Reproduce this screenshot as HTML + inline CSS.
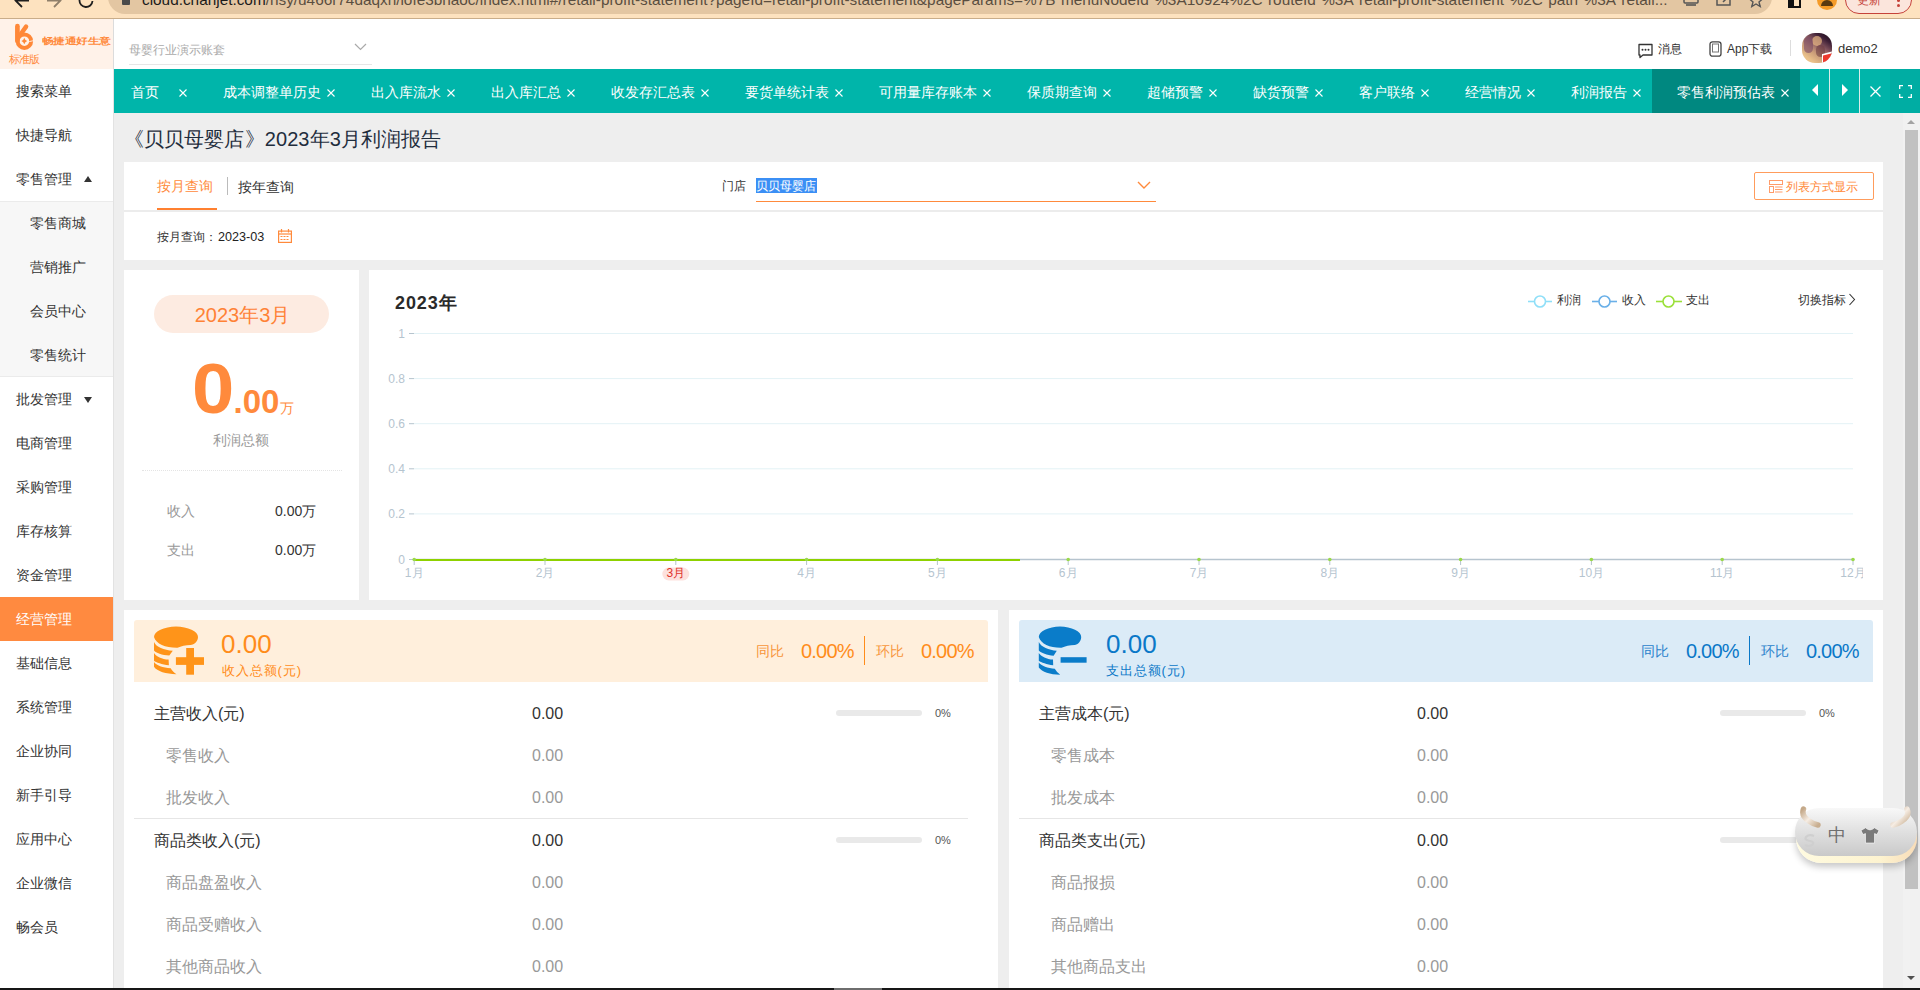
<!DOCTYPE html>
<html><head><meta charset="utf-8">
<style>
*{margin:0;padding:0;box-sizing:border-box}
html,body{width:1920px;height:990px;overflow:hidden;background:#eeeeee;font-family:"Liberation Sans",sans-serif;color:#333;font-size:14px;position:relative}
.a{position:absolute;white-space:nowrap}
#chrome{position:absolute;left:0;top:0;width:1920px;height:19px;background:#fde2bf;border-bottom:1px solid #c9ad8a;overflow:hidden}
#url{position:absolute;left:108px;top:-20px;width:1664px;height:34px;border-radius:17px;background:#e3c6a2}
#urltext{position:absolute;left:142px;top:-9px;font-size:15.35px;color:#5a4e40;white-space:nowrap;letter-spacing:0}
#header{position:absolute;left:0;top:19px;width:1920px;height:50px;background:#fff}
#logo{position:absolute;left:0;top:19px;width:114px;height:50px;background:#fff2e9;border-right:1px solid #dcdcdc}
#side{position:absolute;left:0;top:69px;width:114px;height:921px;background:#fff;border-right:1px solid #e2e2e2}
.si{position:absolute;left:0;width:113px;height:44px;line-height:44px;padding-left:16px;font-size:14px;color:#333;white-space:nowrap}
.si.sub{padding-left:30px}
.si.act{background:#ff8a40;color:#fff}
.tri{position:absolute;left:84px;top:20px;width:0;height:0;border-left:4.5px solid transparent;border-right:4.5px solid transparent}
.tri.up{border-bottom:6px solid #333;top:19px}
.tri.dn{border-top:6px solid #333}
#subbg{position:absolute;left:0;top:201px;width:113px;height:176px;background:#f7f7f7;border-top:1px solid #ebebeb;border-bottom:1px solid #ebebeb}
#tabs{position:absolute;left:114px;top:69px;width:1806px;height:44px;background:#00b5aa;overflow:hidden}
.tab{position:absolute;top:0;height:44px;line-height:44px;color:#fff;font-size:14px;white-space:nowrap}
.tab.act{background:#008880}
.tab .tt{position:absolute;left:25px;top:1px}
.tab .x{position:absolute;top:20px;height:8px;line-height:0}
.ctl{position:absolute;top:0;width:30px;height:44px;background:#00b5aa}
#main{position:absolute;left:114px;top:113px;width:1790px;height:877px;background:#eeeeee}
.card{position:absolute;background:#fff}
.yl{font-size:12px;fill:#b5c4cf;font-family:"Liberation Sans",sans-serif}
.xl{font-size:12px;fill:#b5c4cf;font-family:"Liberation Sans",sans-serif}
.rl,.rv{position:absolute;font-size:16px;line-height:24px;white-space:nowrap;margin-top:1px}
.rh{color:#333}
.rs{color:#999}
.bar{position:absolute;width:86px;height:6px;border-radius:3px;background:#e9e9e9}
.pct{position:absolute;font-size:11px;line-height:18px;color:#555}
.div{position:absolute;height:1px;background:#e6e6e6}
#scroll{position:absolute;left:1903px;top:113px;width:17px;height:875px;background:#f1f1f1}
#thumb{position:absolute;left:2px;top:17px;width:13px;height:759px;background:#c1c1c1}
#bottombar{position:absolute;left:0;top:988px;width:1920px;height:2px;background:#161616}
</style></head><body>

<!-- browser chrome -->
<div id="chrome">
  <svg class="a" style="left:0;top:0" width="100" height="12" viewBox="0 0 100 12"><path d="M22 7L15.5 0.5L22 -6M15.5 0.5H29" stroke="#1e1e1e" stroke-width="1.8" fill="none"/><path d="M54 7L60.5 0.5L54 -6M60.5 0.5H47" stroke="#8f7f6a" stroke-width="1.8" fill="none"/><path d="M92.5 1A6.5 6.5 0 1 1 79.5 0" stroke="#1e1e1e" stroke-width="1.8" fill="none"/></svg>
  
  
  <div id="url"></div>
  <div class="a" style="left:122px;top:-2px;width:8px;height:7px;background:#4a4a4a;border-radius:1px"></div>
  <div id="urltext"><span style="color:#1a1a1a">cloud.chanjet.com</span>/nsy/u466r74daqxn/lofe3bnaoc/index.html#/retail-profit-statement?pageId=retail-profit-statement&amp;pageParams=%7B"menuNodeId"%3A10924%2C"routeId"%3A"retail-profit-statement"%2C"path"%3A"retail...</div>
  <svg class="a" style="left:1682px;top:-4px" width="18" height="12" viewBox="0 0 18 12"><rect x="2" y="-2" width="14" height="9" rx="1" stroke="#555" stroke-width="1.5" fill="none"/><path d="M4 9H14" stroke="#555" stroke-width="1.6"/></svg>
  <svg class="a" style="left:1715px;top:-4px" width="18" height="12" viewBox="0 0 18 12"><path d="M2 0V9H15V4" stroke="#555" stroke-width="1.5" fill="none"/><path d="M8 6L13 1" stroke="#555" stroke-width="1.5"/></svg>
  <svg class="a" style="left:1747px;top:-4px" width="18" height="12" viewBox="0 0 18 12"><path d="M9 -3L11 2L16 2.5L12 6L13.2 10.5L9 8L4.8 10.5L6 6L2 2.5L7 2Z" stroke="#555" stroke-width="1.4" fill="none"/></svg>
  <div class="a" style="left:1788px;top:-3px;width:13px;height:11px;border:2px solid #111;border-left-width:6px"></div>
  <div class="a" style="left:1817px;top:-10px;width:20px;height:20px;border-radius:10px;background:#f59b27"><div class="a" style="left:4px;top:10px;width:12px;height:6px;border-radius:6px 6px 0 0;background:#5a3a10"></div></div>
  <div class="a" style="left:1845px;top:-14px;width:67px;height:28px;border-radius:14px;border:1px solid #c5423a;background:#fbe5dc"></div>
  <div class="a" style="left:1857px;top:-8px;font-size:12px;color:#c5423a">更新</div>
  <div class="a" style="left:1897px;top:-1px;width:3px;height:3px;border-radius:2px;background:#c5423a"></div>
  <div class="a" style="left:1897px;top:4px;width:3px;height:3px;border-radius:2px;background:#c5423a"></div>
</div>

<!-- header -->
<div id="header">
  <div class="a" style="left:129px;top:22.5px;font-size:12px;color:#aaa">母婴行业演示账套</div>
  <div class="a" style="left:129px;top:45px;width:243px;height:1px;background:#e6e6e6"></div>
  <svg class="a" style="left:354px;top:23.5px" width="13" height="8" viewBox="0 0 13 8"><path d="M1 1L6.5 6.5L12 1" stroke="#aaa" stroke-width="1.2" fill="none"/></svg>

  <svg class="a" style="left:1637px;top:24px" width="17" height="16" viewBox="0 0 17 16"><path d="M2 1.5H15V12H6L3 14.5V12H2Z" stroke="#333" stroke-width="1.3" fill="none" stroke-linejoin="round"/><circle cx="5.5" cy="6.8" r="1" fill="#333"/><circle cx="8.5" cy="6.8" r="1" fill="#333"/><circle cx="11.5" cy="6.8" r="1" fill="#333"/></svg>
  <div class="a" style="left:1658px;top:22px;font-size:12px;color:#333">消息</div>
  <svg class="a" style="left:1709px;top:22px" width="13" height="16" viewBox="0 0 13 16"><rect x="1" y="0.8" width="11" height="14.4" rx="2.5" stroke="#444" stroke-width="1.3" fill="none"/><rect x="3.5" y="3" width="6" height="8" fill="none" stroke="#777" stroke-width="1"/></svg>
  <div class="a" style="left:1727px;top:22px;font-size:12px;color:#333">App下载</div>
  <div class="a" style="left:1790px;top:21px;width:1px;height:16px;background:#ddd"></div>
  <div class="a" style="left:1802px;top:14px;width:30px;height:30px;border-radius:13px;overflow:hidden;background:linear-gradient(215deg,#12060f 0%,#3e2036 22%,#8a5a62 42%,#c89a78 62%,#e9c08a 82%,#f0c98e 100%)">
    <div class="a" style="left:10px;top:3px;width:10px;height:10px;border-radius:5px;background:#e0b080;opacity:.75"></div>
    <div class="a" style="left:2px;top:4px;width:9px;height:16px;border-radius:5px;background:#7a4a66;opacity:.6"></div>
    <div class="a" style="left:14px;top:12px;width:9px;height:12px;border-radius:5px;background:#6a3a40;opacity:.55"></div>
    <div class="a" style="left:19.5px;top:18px;width:12px;height:13px;background:#fff;clip-path:polygon(0 25%,100% 0,100% 100%,0 100%)"></div>
    <div class="a" style="left:21px;top:20px;width:10px;height:11px;background:#ec3b2f;clip-path:polygon(0 22%,100% 0,100% 100%,0 100%)"></div>
  </div>
  <div class="a" style="left:1838px;top:21.5px;font-size:13px;color:#333">demo2</div>
</div>

<!-- logo -->
<div id="logo">
  <svg class="a" style="left:10px;top:1px" width="30" height="32" viewBox="0 0 30 32"><path d="M7.4 6.2V21" stroke="#ff8838" stroke-width="4.7" stroke-linecap="round" fill="none"/><path d="M16.1 6.6L10.8 14" stroke="#ff8838" stroke-width="4.4" stroke-linecap="round" fill="none"/><circle cx="14.4" cy="21.2" r="6.75" stroke="#ff8838" stroke-width="3.9" fill="none"/><path d="M19.2 21.6L23.8 20.6" stroke="#fff2e9" stroke-width="0.9"/><path d="M14.3 17.7Q15 20.3 17.2 21Q15 21.7 14.3 24.3Q13.6 21.7 11.4 21Q13.6 20.3 14.3 17.7Z" fill="#ff8838"/></svg>
  <div class="a" style="left:42px;top:13px;font-size:11.3px;font-weight:bold;color:#ff8a3c;letter-spacing:0px;transform:scale(1.045,0.8);transform-origin:0 100%">畅捷通好生意</div>
  <div class="a" style="left:9px;top:33px;font-size:11px;color:#ff8a3c;letter-spacing:-1px">标准版</div>
</div>

<!-- sidebar -->
<div id="side"></div>
<div id="subbg"></div>
<div class="si" style="top:69px">搜索菜单</div>
<div class="si" style="top:113px">快捷导航</div>
<div class="si" style="top:157px">零售管理<span class="tri up"></span></div>
<div class="si sub" style="top:201px">零售商城</div>
<div class="si sub" style="top:245px">营销推广</div>
<div class="si sub" style="top:289px">会员中心</div>
<div class="si sub" style="top:333px">零售统计</div>
<div class="si" style="top:377px">批发管理<span class="tri dn"></span></div>
<div class="si" style="top:421px">电商管理</div>
<div class="si" style="top:465px">采购管理</div>
<div class="si" style="top:509px">库存核算</div>
<div class="si" style="top:553px">资金管理</div>
<div class="si act" style="top:597px">经营管理</div>
<div class="si" style="top:641px">基础信息</div>
<div class="si" style="top:685px">系统管理</div>
<div class="si" style="top:729px">企业协同</div>
<div class="si" style="top:773px">新手引导</div>
<div class="si" style="top:817px">应用中心</div>
<div class="si" style="top:861px">企业微信</div>
<div class="si" style="top:905px">畅会员</div>

<!-- tabs -->
<div id="tabs">
<div class="tab" style="left:-8px;width:92px"><span class="tt">首页</span><span class="x" style="left:73px"><svg width="8" height="8" viewBox="0 0 8 8"><path d="M0.5 0.5L7.5 7.5M7.5 0.5L0.5 7.5" stroke="#fff" stroke-width="1.1"/></svg></span></div>
<div class="tab" style="left:84px;width:148px"><span class="tt">成本调整单历史</span><span class="x" style="left:129px"><svg width="8" height="8" viewBox="0 0 8 8"><path d="M0.5 0.5L7.5 7.5M7.5 0.5L0.5 7.5" stroke="#fff" stroke-width="1.1"/></svg></span></div>
<div class="tab" style="left:232px;width:120px"><span class="tt">出入库流水</span><span class="x" style="left:101px"><svg width="8" height="8" viewBox="0 0 8 8"><path d="M0.5 0.5L7.5 7.5M7.5 0.5L0.5 7.5" stroke="#fff" stroke-width="1.1"/></svg></span></div>
<div class="tab" style="left:352px;width:120px"><span class="tt">出入库汇总</span><span class="x" style="left:101px"><svg width="8" height="8" viewBox="0 0 8 8"><path d="M0.5 0.5L7.5 7.5M7.5 0.5L0.5 7.5" stroke="#fff" stroke-width="1.1"/></svg></span></div>
<div class="tab" style="left:472px;width:134px"><span class="tt">收发存汇总表</span><span class="x" style="left:115px"><svg width="8" height="8" viewBox="0 0 8 8"><path d="M0.5 0.5L7.5 7.5M7.5 0.5L0.5 7.5" stroke="#fff" stroke-width="1.1"/></svg></span></div>
<div class="tab" style="left:606px;width:134px"><span class="tt">要货单统计表</span><span class="x" style="left:115px"><svg width="8" height="8" viewBox="0 0 8 8"><path d="M0.5 0.5L7.5 7.5M7.5 0.5L0.5 7.5" stroke="#fff" stroke-width="1.1"/></svg></span></div>
<div class="tab" style="left:740px;width:148px"><span class="tt">可用量库存账本</span><span class="x" style="left:129px"><svg width="8" height="8" viewBox="0 0 8 8"><path d="M0.5 0.5L7.5 7.5M7.5 0.5L0.5 7.5" stroke="#fff" stroke-width="1.1"/></svg></span></div>
<div class="tab" style="left:888px;width:120px"><span class="tt">保质期查询</span><span class="x" style="left:101px"><svg width="8" height="8" viewBox="0 0 8 8"><path d="M0.5 0.5L7.5 7.5M7.5 0.5L0.5 7.5" stroke="#fff" stroke-width="1.1"/></svg></span></div>
<div class="tab" style="left:1008px;width:106px"><span class="tt">超储预警</span><span class="x" style="left:87px"><svg width="8" height="8" viewBox="0 0 8 8"><path d="M0.5 0.5L7.5 7.5M7.5 0.5L0.5 7.5" stroke="#fff" stroke-width="1.1"/></svg></span></div>
<div class="tab" style="left:1114px;width:106px"><span class="tt">缺货预警</span><span class="x" style="left:87px"><svg width="8" height="8" viewBox="0 0 8 8"><path d="M0.5 0.5L7.5 7.5M7.5 0.5L0.5 7.5" stroke="#fff" stroke-width="1.1"/></svg></span></div>
<div class="tab" style="left:1220px;width:106px"><span class="tt">客户联络</span><span class="x" style="left:87px"><svg width="8" height="8" viewBox="0 0 8 8"><path d="M0.5 0.5L7.5 7.5M7.5 0.5L0.5 7.5" stroke="#fff" stroke-width="1.1"/></svg></span></div>
<div class="tab" style="left:1326px;width:106px"><span class="tt">经营情况</span><span class="x" style="left:87px"><svg width="8" height="8" viewBox="0 0 8 8"><path d="M0.5 0.5L7.5 7.5M7.5 0.5L0.5 7.5" stroke="#fff" stroke-width="1.1"/></svg></span></div>
<div class="tab" style="left:1432px;width:106px"><span class="tt">利润报告</span><span class="x" style="left:87px"><svg width="8" height="8" viewBox="0 0 8 8"><path d="M0.5 0.5L7.5 7.5M7.5 0.5L0.5 7.5" stroke="#fff" stroke-width="1.1"/></svg></span></div>
<div class="tab act" style="left:1538px;width:148px"><span class="tt">零售利润预估表</span><span class="x" style="left:129px"><svg width="8" height="8" viewBox="0 0 8 8"><path d="M0.5 0.5L7.5 7.5M7.5 0.5L0.5 7.5" stroke="#fff" stroke-width="1.1"/></svg></span></div>
  <div class="ctl" style="left:1686px"><div class="a" style="left:12px;top:15px;width:0;height:0;border-top:6px solid transparent;border-bottom:6px solid transparent;border-right:6px solid #fff"></div></div>
  <div class="a" style="left:1715px;top:0;width:1px;height:44px;background:#d9ece9"></div>
  <div class="ctl" style="left:1716px"><div class="a" style="left:12px;top:15px;width:0;height:0;border-top:6px solid transparent;border-bottom:6px solid transparent;border-left:6px solid #fff"></div></div>
  <div class="a" style="left:1745px;top:0;width:1px;height:44px;background:#d9ece9"></div>
  <div class="ctl" style="left:1746px"><svg class="a" style="left:10px;top:17px" width="11" height="11" viewBox="0 0 11 11"><path d="M0.5 0.5L10.5 10.5M10.5 0.5L0.5 10.5" stroke="#fff" stroke-width="1.3"/></svg></div>
  <div class="ctl" style="left:1776px;width:30px;background:#00ada3"><svg class="a" style="left:9px;top:16px" width="13" height="13" viewBox="0 0 13 13"><path d="M0.7 4V0.7H4M9 0.7H12.3V4M12.3 9V12.3H9M4 12.3H0.7V9" stroke="#fff" stroke-width="1.3" fill="none"/></svg></div>
</div>

<!-- main -->
<div id="main"></div>
<div class="a" style="left:124px;top:125px;font-size:20px;color:#1f2d3d;line-height:28px;letter-spacing:0.1px">《贝贝母婴店》2023年3月利润报告</div>

<!-- filter card -->
<div class="card" style="left:124px;top:162px;width:1759px;height:98px"></div>
<div class="a" style="left:124px;top:210px;width:1759px;height:2px;background:#ececec"></div>
<div class="a" style="left:157px;top:176px;font-size:14px;color:#ff8a3c;line-height:20px">按月查询</div>
<div class="a" style="left:157px;top:208px;width:60px;height:2px;background:#ff8030"></div>
<div class="a" style="left:227px;top:177px;width:1px;height:18px;background:#bbb"></div>
<div class="a" style="left:238px;top:177px;font-size:14px;color:#333;line-height:20px">按年查询</div>
<div class="a" style="left:722px;top:177px;font-size:12px;color:#333;line-height:18px">门店</div>
<div class="a" style="left:756px;top:178px;height:15px;width:61px;background:#3b8ff5"></div>
<div class="a" style="left:756px;top:177px;font-size:12px;color:#fff;line-height:18px">贝贝母婴店</div>
<div class="a" style="left:756px;top:201px;width:400px;height:1px;background:#ff8a3c"></div>
<svg class="a" style="left:1137px;top:181px" width="14" height="9" viewBox="0 0 14 9"><path d="M1 1L7 7L13 1" stroke="#ff8a3c" stroke-width="1.4" fill="none"/></svg>
<div class="a" style="left:1754px;top:172px;width:120px;height:28px;border:1px solid #ff9c5c;border-radius:2px"></div>
<svg class="a" style="left:1769px;top:180px" width="14" height="13" viewBox="0 0 14 13"><rect x="0.5" y="0.5" width="13" height="4" fill="none" stroke="#ff9c6a" stroke-width="1"/><rect x="0.5" y="6.5" width="4" height="6" fill="none" stroke="#ff9c6a" stroke-width="1"/><path d="M6 7H13.5M6 9.5H13.5M6 12H13.5" stroke="#ff9c6a" stroke-width="1"/></svg>
<div class="a" style="left:1786px;top:178px;font-size:12px;color:#ff8a3c;line-height:18px">列表方式显示</div>
<div class="a" style="left:157px;top:228px;font-size:12px;color:#333;line-height:18px">按月查询：</div><div class="a" style="left:218px;top:228px;font-size:12.6px;color:#222;line-height:18px">2023-03</div>
<svg class="a" style="left:278px;top:229px" width="14" height="14" viewBox="0 0 14 14"><rect x="0.6" y="2.1" width="12.8" height="11.3" fill="none" stroke="#ff8a3c" stroke-width="1.2"/><path d="M0.6 5H13.4" stroke="#ff8a3c" stroke-width="1.2"/><path d="M3.5 0V3.5M10.5 0V3.5" stroke="#ff8a3c" stroke-width="1.2"/><path d="M2.5 7.5H11.5M2.5 10.5H11.5" stroke="#ff8a3c" stroke-width="1" stroke-dasharray="2 1"/></svg>

<!-- stats card -->
<div class="card" style="left:124px;top:270px;width:235px;height:330px"></div>
<div class="a" style="left:154px;top:295px;width:175px;height:38px;border-radius:19px;background:#fdebe1"></div>
<div class="a" style="left:155px;top:300px;width:175px;text-align:center;font-size:20px;color:#ff8236;line-height:30px">2023年3月</div>
<div class="a" style="left:192px;top:349px;font-weight:bold;color:#ff8a3c;line-height:80px"><span style="font-size:71px;display:inline-block;transform:scaleX(1.07);transform-origin:left">0</span><span style="font-size:33px;margin-left:2px">.00</span><span style="font-size:14px;font-weight:normal;margin-left:1px">万</span></div>
<div class="a" style="left:213px;top:430px;font-size:14px;color:#999;line-height:20px">利润总额</div>
<div class="a" style="left:142px;top:470px;width:200px;height:0;border-top:1px dotted #e4e4e4"></div>
<div class="a" style="left:167px;top:501px;font-size:14px;color:#999;line-height:20px">收入</div>
<div class="a" style="left:275px;top:501px;font-size:14px;color:#333;line-height:20px">0.00万</div>
<div class="a" style="left:167px;top:540px;font-size:14px;color:#999;line-height:20px">支出</div>
<div class="a" style="left:275px;top:540px;font-size:14px;color:#333;line-height:20px">0.00万</div>

<!-- chart card -->
<div class="card" style="left:369px;top:270px;width:1514px;height:330px"></div>
<div class="a" style="left:395px;top:291px;font-size:18px;font-weight:bold;color:#2a2a2a;line-height:24px;letter-spacing:0.9px">2023年</div>
<svg class="a" style="left:0;top:0" width="1920" height="990"><defs><clipPath id="cc"><rect x="369" y="270" width="1494" height="330"/></clipPath></defs><g clip-path="url(#cc)">
<line x1="409" y1="333.5" x2="414" y2="333.5" stroke="#b6c4ce" stroke-width="1"/>
<line x1="414" y1="333.5" x2="1853" y2="333.5" stroke="#e3f2f6" stroke-width="1"/>
<text x="405" y="338.0" text-anchor="end" class="yl">1</text>
<line x1="409" y1="378.6" x2="414" y2="378.6" stroke="#b6c4ce" stroke-width="1"/>
<line x1="414" y1="378.6" x2="1853" y2="378.6" stroke="#e3f2f6" stroke-width="1"/>
<text x="405" y="383.1" text-anchor="end" class="yl">0.8</text>
<line x1="409" y1="423.7" x2="414" y2="423.7" stroke="#b6c4ce" stroke-width="1"/>
<line x1="414" y1="423.7" x2="1853" y2="423.7" stroke="#e3f2f6" stroke-width="1"/>
<text x="405" y="428.2" text-anchor="end" class="yl">0.6</text>
<line x1="409" y1="468.8" x2="414" y2="468.8" stroke="#b6c4ce" stroke-width="1"/>
<line x1="414" y1="468.8" x2="1853" y2="468.8" stroke="#e3f2f6" stroke-width="1"/>
<text x="405" y="473.3" text-anchor="end" class="yl">0.4</text>
<line x1="409" y1="513.9" x2="414" y2="513.9" stroke="#b6c4ce" stroke-width="1"/>
<line x1="414" y1="513.9" x2="1853" y2="513.9" stroke="#e3f2f6" stroke-width="1"/>
<text x="405" y="518.4" text-anchor="end" class="yl">0.2</text>
<line x1="409" y1="559.5" x2="414" y2="559.5" stroke="#b6c4ce" stroke-width="1"/>
<text x="405" y="564" text-anchor="end" class="yl">0</text>
<line x1="414" y1="559.5" x2="1853" y2="559.5" stroke="#b6c4ce" stroke-width="1.5"/>
<line x1="414.2" y1="559" x2="414.2" y2="565" stroke="#b6c4ce" stroke-width="1"/>
<line x1="545.0" y1="559" x2="545.0" y2="565" stroke="#b6c4ce" stroke-width="1"/>
<line x1="675.8" y1="559" x2="675.8" y2="565" stroke="#b6c4ce" stroke-width="1"/>
<line x1="806.6" y1="559" x2="806.6" y2="565" stroke="#b6c4ce" stroke-width="1"/>
<line x1="937.4" y1="559" x2="937.4" y2="565" stroke="#b6c4ce" stroke-width="1"/>
<line x1="1068.2" y1="559" x2="1068.2" y2="565" stroke="#b6c4ce" stroke-width="1"/>
<line x1="1199.0" y1="559" x2="1199.0" y2="565" stroke="#b6c4ce" stroke-width="1"/>
<line x1="1329.8" y1="559" x2="1329.8" y2="565" stroke="#b6c4ce" stroke-width="1"/>
<line x1="1460.6" y1="559" x2="1460.6" y2="565" stroke="#b6c4ce" stroke-width="1"/>
<line x1="1591.4" y1="559" x2="1591.4" y2="565" stroke="#b6c4ce" stroke-width="1"/>
<line x1="1722.2" y1="559" x2="1722.2" y2="565" stroke="#b6c4ce" stroke-width="1"/>
<line x1="1853.0" y1="559" x2="1853.0" y2="565" stroke="#b6c4ce" stroke-width="1"/>
<line x1="414" y1="560" x2="1020" y2="560" stroke="#8ed100" stroke-width="2.2"/>
<circle cx="414.2" cy="559.5" r="1.8" fill="#9ad94a"/>
<circle cx="545.0" cy="559.5" r="1.8" fill="#9ad94a"/>
<circle cx="675.8" cy="559.5" r="1.8" fill="#9ad94a"/>
<circle cx="806.6" cy="559.5" r="1.8" fill="#9ad94a"/>
<circle cx="937.4" cy="559.5" r="1.8" fill="#9ad94a"/>
<circle cx="1068.2" cy="559.5" r="1.8" fill="#9ad94a"/>
<circle cx="1199.0" cy="559.5" r="1.8" fill="#9ad94a"/>
<circle cx="1329.8" cy="559.5" r="1.8" fill="#9ad94a"/>
<circle cx="1460.6" cy="559.5" r="1.8" fill="#9ad94a"/>
<circle cx="1591.4" cy="559.5" r="1.8" fill="#9ad94a"/>
<circle cx="1722.2" cy="559.5" r="1.8" fill="#9ad94a"/>
<circle cx="1853.0" cy="559.5" r="1.8" fill="#9ad94a"/>
<text x="414.2" y="576.5" text-anchor="middle" class="xl">1月</text>
<text x="545.0" y="576.5" text-anchor="middle" class="xl">2月</text>
<rect x="662.3" y="567.5" width="27" height="13" rx="6.5" fill="#fde1dd"/>
<text x="675.8" y="576.5" text-anchor="middle" class="xl" style="fill:#e0312b">3月</text>
<text x="806.6" y="576.5" text-anchor="middle" class="xl">4月</text>
<text x="937.4" y="576.5" text-anchor="middle" class="xl">5月</text>
<text x="1068.2" y="576.5" text-anchor="middle" class="xl">6月</text>
<text x="1199.0" y="576.5" text-anchor="middle" class="xl">7月</text>
<text x="1329.8" y="576.5" text-anchor="middle" class="xl">8月</text>
<text x="1460.6" y="576.5" text-anchor="middle" class="xl">9月</text>
<text x="1591.4" y="576.5" text-anchor="middle" class="xl">10月</text>
<text x="1722.2" y="576.5" text-anchor="middle" class="xl">11月</text>
<text x="1853.0" y="576.5" text-anchor="middle" class="xl">12月</text>
</g></svg>
<svg class="a" style="left:1527px;top:293.5px" width="190" height="15" viewBox="0 0 190 15">
  <path d="M1 7.5H25" stroke="#8fdff8" stroke-width="1.6"/><circle cx="13" cy="7.5" r="5.5" fill="#fff" stroke="#8fdff8" stroke-width="1.6"/>
  <path d="M65 7.5H90" stroke="#6ab0e8" stroke-width="1.6"/><circle cx="77.5" cy="7.5" r="5.5" fill="#fff" stroke="#6ab0e8" stroke-width="1.6"/>
  <path d="M129 7.5H155" stroke="#9be03a" stroke-width="1.6"/><circle cx="141.5" cy="7.5" r="5.5" fill="#fff" stroke="#9be03a" stroke-width="1.6"/>
</svg>
<div class="a" style="left:1557px;top:291px;font-size:12px;color:#333;line-height:18px">利润</div>
<div class="a" style="left:1622px;top:291px;font-size:12px;color:#333;line-height:18px">收入</div>
<div class="a" style="left:1686px;top:291px;font-size:12px;color:#333;line-height:18px">支出</div>
<div class="a" style="left:1798px;top:291px;font-size:12px;color:#333;line-height:18px">切换指标</div>
<svg class="a" style="left:1848px;top:293px" width="8" height="13" viewBox="0 0 8 13"><path d="M1.5 1L6.5 6.5L1.5 12" stroke="#333" stroke-width="1.1" fill="none"/></svg>

<!-- income card -->
<div class="card" style="left:124px;top:610px;width:874px;height:380px"></div>
<div class="a" style="left:134px;top:620px;width:854px;height:62px;background:#ffefdc;border-radius:3px 3px 0 0"></div>
<svg class="a" style="left:148px;top:622px" width="60" height="60" viewBox="0 0 60 60" fill="#ff9419">
  <path d="M6 15A22 10.4 0 0 1 50 15C50 19 46.5 22.8 42.4 23C38 23.2 33 24 29.5 25.8C18 26 8 22 6 15Z"/>
  <path d="M6 20C8 25 16 28.2 24.8 28.8L21.3 33.6C14 33 8 31 6 28.5Z"/>
  <path d="M6 30.9C8 34.5 14 37 20.6 37.6L20.9 43.3C14 42.5 8 40.5 6 38.8Z"/>
  <path d="M6 40C8 43.5 15 45.6 22.7 46.2C24 48.5 26 50.5 28.5 52.2C18 52 9 49.5 6 44.8Z"/>
  <rect x="38.2" y="26" width="7.8" height="26.7"/>
  <rect x="27.9" y="35.2" width="28.1" height="7.7"/>
</svg>
<div class="a" style="left:221px;top:626px;font-size:26px;color:#ff8c1a;line-height:36px">0.00</div>
<div class="a" style="left:222px;top:661.5px;font-size:13px;color:#ff8c1a;line-height:18px;letter-spacing:0.9px">收入总额(元)</div>
<div class="a" style="left:756px;top:641px;font-size:14px;color:#f7953a;line-height:20px">同比</div>
<div class="a" style="left:801px;top:637px;font-size:20px;color:#ff8c1a;line-height:28px;letter-spacing:-0.8px">0.00%</div>
<div class="a" style="left:864px;top:636px;width:1px;height:29px;background:#ff8c1a"></div>
<div class="a" style="left:876px;top:641px;font-size:14px;color:#f7953a;line-height:20px">环比</div>
<div class="a" style="left:921px;top:637px;font-size:20px;color:#ff8c1a;line-height:28px;letter-spacing:-0.8px">0.00%</div>
<div class="rl rh" style="left:154px;top:701px">主营收入(元)</div>
<div class="rv rh" style="left:532px;top:701px">0.00</div>
<div class="bar" style="left:836px;top:710px"></div>
<div class="pct" style="left:935px;top:704px">0%</div>
<div class="rl rs" style="left:166px;top:743px">零售收入</div>
<div class="rv rs" style="left:532px;top:743px">0.00</div>
<div class="rl rs" style="left:166px;top:785px">批发收入</div>
<div class="rv rs" style="left:532px;top:785px">0.00</div>
<div class="rl rh" style="left:154px;top:828px">商品类收入(元)</div>
<div class="rv rh" style="left:532px;top:828px">0.00</div>
<div class="bar" style="left:836px;top:837px"></div>
<div class="pct" style="left:935px;top:831px">0%</div>
<div class="rl rs" style="left:166px;top:870px">商品盘盈收入</div>
<div class="rv rs" style="left:532px;top:870px">0.00</div>
<div class="rl rs" style="left:166px;top:912px">商品受赠收入</div>
<div class="rv rs" style="left:532px;top:912px">0.00</div>
<div class="rl rs" style="left:166px;top:954px">其他商品收入</div>
<div class="rv rs" style="left:532px;top:954px">0.00</div>
<div class="div" style="left:134px;width:834px;top:818px"></div>

<!-- expense card -->
<div class="card" style="left:1009px;top:610px;width:874px;height:380px"></div>
<div class="a" style="left:1019px;top:620px;width:854px;height:62px;background:#dbebf7;border-radius:3px 3px 0 0"></div>
<svg class="a" style="left:1033px;top:622px" width="60" height="60" viewBox="0 0 60 60" fill="#0a7cc9">
  <path d="M5.8 15A21.2 10.4 0 0 1 48.2 15C48.2 19 45 22.8 41.5 23C37 23.2 32 24 28.5 25.8C17 26 8 22 5.8 15Z"/>
  <path d="M5.8 20C8 25 16 28.2 23.8 28.8L20.6 33.8C14 33 8 31 5.8 28.5Z"/>
  <path d="M5.8 30.9C8 34.5 14 37 20 37.6L20.2 43.3C14 42.5 8 40.5 5.8 38.8Z"/>
  <path d="M5.8 40.5C8 44 15 46 21.8 46.8C23 49 25 51 27.2 52.8C17 52.5 9 50 5.8 45.5Z"/>
  <rect x="27.6" y="35.2" width="26" height="5.5"/>
</svg>
<div class="a" style="left:1106px;top:626px;font-size:26px;color:#0a78c8;line-height:36px">0.00</div>
<div class="a" style="left:1106px;top:661.5px;font-size:13px;color:#0a78c8;line-height:18px;letter-spacing:0.9px">支出总额(元)</div>
<div class="a" style="left:1641px;top:641px;font-size:14px;color:#2a82cc;line-height:20px">同比</div>
<div class="a" style="left:1686px;top:637px;font-size:20px;color:#0a78c8;line-height:28px;letter-spacing:-0.8px">0.00%</div>
<div class="a" style="left:1749px;top:636px;width:1px;height:29px;background:#0a78c8"></div>
<div class="a" style="left:1761px;top:641px;font-size:14px;color:#2a82cc;line-height:20px">环比</div>
<div class="a" style="left:1806px;top:637px;font-size:20px;color:#0a78c8;line-height:28px;letter-spacing:-0.8px">0.00%</div>
<div class="rl rh" style="left:1039px;top:701px">主营成本(元)</div>
<div class="rv rh" style="left:1417px;top:701px">0.00</div>
<div class="bar" style="left:1720px;top:710px"></div>
<div class="pct" style="left:1819px;top:704px">0%</div>
<div class="rl rs" style="left:1051px;top:743px">零售成本</div>
<div class="rv rs" style="left:1417px;top:743px">0.00</div>
<div class="rl rs" style="left:1051px;top:785px">批发成本</div>
<div class="rv rs" style="left:1417px;top:785px">0.00</div>
<div class="rl rh" style="left:1039px;top:828px">商品类支出(元)</div>
<div class="rv rh" style="left:1417px;top:828px">0.00</div>
<div class="bar" style="left:1720px;top:837px"></div>
<div class="pct" style="left:1819px;top:831px">0%</div>
<div class="rl rs" style="left:1051px;top:870px">商品报损</div>
<div class="rv rs" style="left:1417px;top:870px">0.00</div>
<div class="rl rs" style="left:1051px;top:912px">商品赠出</div>
<div class="rv rs" style="left:1417px;top:912px">0.00</div>
<div class="rl rs" style="left:1051px;top:954px">其他商品支出</div>
<div class="rv rs" style="left:1417px;top:954px">0.00</div>
<div class="div" style="left:1019px;width:834px;top:818px"></div>

<!-- scrollbar -->
<div id="scroll"><div id="thumb"></div>
  <div class="a" style="left:4px;top:7px;width:0;height:0;border-left:4.5px solid transparent;border-right:4.5px solid transparent;border-bottom:4px solid #a3a3a3"></div>
  <div class="a" style="left:4px;top:863px;width:0;height:0;border-left:4.5px solid transparent;border-right:4.5px solid transparent;border-top:4px solid #505050"></div>
</div>
<!-- IME widget -->
<div class="a" style="left:1796px;top:812px;width:121px;height:51px;border-radius:25px;background:linear-gradient(90deg,#fffbe0,#fdf3d0 70%,#f8dcb8);box-shadow:0 4px 7px rgba(0,0,0,0.22)"></div>
<div class="a" style="left:1795px;top:808px;width:122px;height:48px;border-radius:24px;background:linear-gradient(#f8f8f8,#e2e2e2 45%,#c9c9c9)"></div>
<div class="a" style="left:1828px;top:823px;font-size:18px;color:#6e6e6e;line-height:24px">中</div>
<svg class="a" style="left:1860px;top:827px" width="20" height="17" viewBox="0 0 20 17"><path d="M5.5 0.8L1 3.5L3 7.5L5.5 6.6V16H14.5V6.6L17 7.5L19 3.5L14.5 0.8Q10 5 5.5 0.8Z" fill="#7a7a7a" stroke="#fff" stroke-width="0.6"/></svg>
<svg class="a" style="left:1802px;top:833px" width="16" height="16" viewBox="0 0 16 16"><path d="M12 3Q7 1 4 4Q2 7 8 8Q13 9 10 12Q7 14 3 12" stroke="#cfcfcf" stroke-width="2.2" fill="none"/></svg>
<svg class="a" style="left:1800px;top:806px" width="117" height="24" viewBox="0 0 117 24"><defs><linearGradient id="hg" x1="0" y1="0" x2="1" y2="1"><stop offset="0" stop-color="#c4a888"/><stop offset="0.5" stop-color="#f6ede4"/><stop offset="1" stop-color="#c8ae90"/></linearGradient></defs><path d="M3.5 3Q1 10 9 15Q13 18 18 19" stroke="url(#hg)" stroke-width="5.5" fill="none" stroke-linecap="round"/><path d="M107 3Q110 10 102 15Q98 18 93 19" stroke="url(#hg)" stroke-width="5.5" fill="none" stroke-linecap="round"/></svg>

<div id="bottombar"></div>
<div class="a" style="left:834px;top:988px;width:48px;height:2px;background:#6e6e6e"></div>
</body></html>
